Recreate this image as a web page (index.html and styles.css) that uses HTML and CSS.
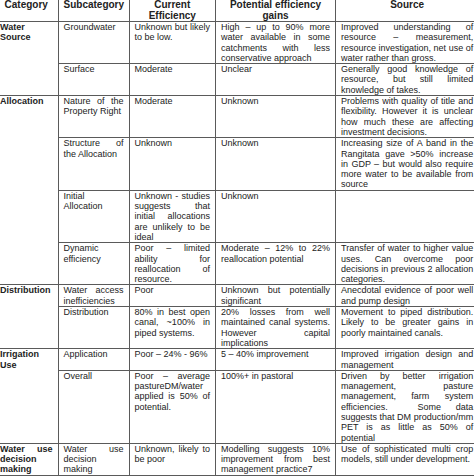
FILE: index.html
```html
<!DOCTYPE html>
<html>
<head>
<meta charset="utf-8">
<link rel="stylesheet" href="styles.css">
</head>
<body>
<table class="grid">
  <colgroup>
    <col class="c-cat">
    <col class="c-sub">
    <col class="c-cur">
    <col class="c-pot">
    <col class="c-src">
  </colgroup>
  <thead>
    <tr>
      <th>Category</th>
      <th>Subcategory</th>
      <th>Current Efficiency</th>
      <th>Potential efficiency gains</th>
      <th>Source</th>
    </tr>
  </thead>
  <tbody>
    <tr>
      <td class="cat" rowspan="2">Water Source</td>
      <td>Groundwater</td>
      <td>Unknown but likely to be low.</td>
      <td>High – up to 90% more water available in some catchments with less conservative approach</td>
      <td>Improved understanding of resource – measurement, resource investigation, net use of water rather than gross.</td>
    </tr>
    <tr>
      <td>Surface</td>
      <td>Moderate</td>
      <td>Unclear</td>
      <td>Generally good knowledge of resource, but still limited knowledge of takes.</td>
    </tr>
    <tr>
      <td class="cat" rowspan="4">Allocation</td>
      <td>Nature of the Property Right</td>
      <td>Moderate</td>
      <td>Unknown</td>
      <td>Problems with quality of title and flexibility. However it is unclear how much these are affecting investment decisions.</td>
    </tr>
    <tr>
      <td>Structure of the Allocation</td>
      <td>Unknown</td>
      <td>Unknown</td>
      <td>Increasing size of A band in the Rangitata gave &gt;50% increase in GDP – but would also require more water to be available from source</td>
    </tr>
    <tr>
      <td>Initial Allocation</td>
      <td>Unknown - studies suggests that initial allocations are unlikely to be ideal</td>
      <td>Unknown</td>
      <td></td>
    </tr>
    <tr>
      <td>Dynamic efficiency</td>
      <td>Poor – limited ability for reallocation of resource.</td>
      <td>Moderate – 12% to 22% reallocation potential</td>
      <td>Transfer of water to higher value uses. Can overcome poor decisions in previous 2 allocation categories.</td>
    </tr>
    <tr>
      <td class="cat" rowspan="2">Distribution</td>
      <td>Water access inefficiencies</td>
      <td>Poor</td>
      <td>Unknown but potentially significant</td>
      <td>Anecdotal evidence of poor well and pump design</td>
    </tr>
    <tr>
      <td>Distribution</td>
      <td>80% in best open canal, ~100% in piped systems.</td>
      <td>20% losses from well maintained canal systems. However capital implications</td>
      <td>Movement to piped distribution. Likely to be greater gains in poorly maintained canals.</td>
    </tr>
    <tr>
      <td class="cat" rowspan="2">Irrigation Use</td>
      <td>Application</td>
      <td>Poor – 24% - 96%</td>
      <td>5 – 40% improvement</td>
      <td>Improved irrigation design and management</td>
    </tr>
    <tr>
      <td>Overall</td>
      <td>Poor – average pastureDM/water applied is 50% of potential.</td>
      <td>100%+ in pastoral</td>
      <td>Driven by better irrigation management, pasture management, farm system efficiencies.&nbsp; Some data suggests that DM production/mm PET is as little as 50% of potential</td>
    </tr>
    <tr>
      <td class="cat">Water use decision making</td>
      <td>Water use decision making</td>
      <td>Unknown, likely to be poor</td>
      <td>Modelling suggests 10% improvement from best management practice7</td>
      <td>Use of sophisticated multi crop models, still under development.</td>
    </tr>
  </tbody>
</table>
</body>
</html>
```

FILE: styles.css
```css
html, body {
  margin: 0;
  padding: 0;
  background: #ffffff;
  overflow: hidden;
}

body {
  font-family: "Liberation Sans", Arial, sans-serif;
  color: #222222;
}

.grid {
  border-collapse: collapse;
  table-layout: fixed;
  width: 484.2px;
  margin: -1px 0 0 -6px;
}

.c-cat { width: 63.5px; }
.c-sub { width: 71px; }
.c-cur { width: 86.5px; }
.c-pot { width: 120px; }
.c-src { width: 143.2px; }

.grid th,
.grid td {
  border: 1px solid #5a5a5a;
  padding: 0 5px;
  vertical-align: top;
}

.grid th {
  font-size: 10px;
  line-height: 10.5px;
  font-weight: bold;
  text-align: center;
}

.grid td {
  font-size: 9px;
  line-height: 10.3px;
  text-align: justify;
}

.grid td.cat {
  font-weight: bold;
}
```
